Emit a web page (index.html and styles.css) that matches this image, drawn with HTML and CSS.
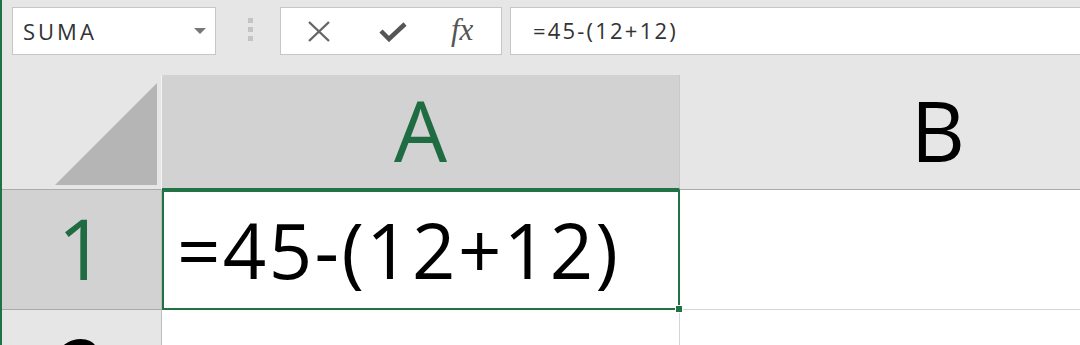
FILE: index.html
```html
<!DOCTYPE html>
<html lang="es">
<head>
  <meta charset="UTF-8" />
  <title>SUMA</title>
  <link rel="stylesheet" href="styles.css">
</head>
<body>
  <div class="toolbar">
    <div class="namebox">
      <span class="name">SUMA</span>
      <span class="caret"></span>
    </div>
    <div class="grip"><i></i><i></i><i></i></div>
    <div class="btnbox">
      <svg class="ico-x" width="24" height="21" viewBox="0 0 24 21">
        <path d="M2 1 L22 20 M22 1 L2 20" stroke="#666" stroke-width="2.4" fill="none"/>
      </svg>
      <svg class="ico-ok" width="30" height="21" viewBox="0 0 30 21">
        <path d="M3 10 L11 18 L27 3" stroke="#555" stroke-width="4.5" fill="none"/>
      </svg>
      <span class="fx">fx</span>
    </div>
    <div class="formula">=45-(12+12)</div>
  </div>

  <div class="sheet">
    <div class="corner">
      <svg width="159" height="114" viewBox="0 0 159 114">
        <polygon points="53,110 155,110 155,8" fill="#b5b5b5"/>
      </svg>
    </div>
    <div class="colhead selected">A</div>
    <div class="colhead">B</div>

    <div class="rowhead selected">1</div>
    <div class="cell active">
      =45-(12+12)
      <span class="handle"></span>
    </div>
    <div class="cell">&nbsp;</div>

    <div class="rowhead">2</div>
    <div class="cell">&nbsp;</div>
    <div class="cell">&nbsp;</div>
  </div>
</body>
</html>
```

FILE: styles.css
```css
body {
  margin: 0;
  height: 345px;
  overflow: hidden;
  background: #e6e6e6;
  border-left: 2px solid #217346;
  font-family: "Open Sans", "Noto Sans", sans-serif;
}

.toolbar {
  display: flex;
  align-items: flex-start;
  height: 75px;
  padding: 7px 0 0 10px;
  box-sizing: border-box;
}

.namebox {
  display: flex;
  align-items: center;
  justify-content: space-between;
  width: 204px;
  height: 48px;
  box-sizing: border-box;
  padding: 0 9px 0 10px;
  background: #fff;
  border: 1px solid #c6c6c6;
}

.name {
  font-size: 22px;
  letter-spacing: 3px;
  color: #333;
}

.caret {
  width: 0;
  height: 0;
  border-left: 6px solid transparent;
  border-right: 6px solid transparent;
  border-top: 6px solid #777;
}

.grip {
  display: flex;
  flex-direction: column;
  gap: 4px;
  margin: 11px 0 0 32px;
}

.grip i {
  display: block;
  width: 5px;
  height: 5px;
  background: #c4c4c4;
}

.btnbox {
  display: flex;
  align-items: center;
  width: 222px;
  height: 48px;
  box-sizing: border-box;
  margin-left: 27px;
  padding-left: 26px;
  background: #fff;
  border: 1px solid #c6c6c6;
}

.ico-ok {
  margin-left: 47px;
}

.fx {
  margin: -4px 0 0 43px;
  font-family: "Liberation Serif", serif;
  font-style: italic;
  font-size: 31px;
  color: #555;
  line-height: 1;
}

.formula {
  flex: 1;
  height: 48px;
  margin: 0 -10px 0 8px;
  padding-left: 22px;
  box-sizing: border-box;
  background: #fff;
  border: 1px solid #c6c6c6;
  font-size: 22px;
  letter-spacing: 2.2px;
  line-height: 45px;
  color: #333;
}

.sheet {
  display: grid;
  grid-template-columns: 160px 518px 517px;
  grid-template-rows: 115px 120px 60px;
  width: 1195px;
}

.corner {
  background: #e6e6e6;
  border-right: 1px solid #f4f4f4;
  border-bottom: 1px solid #ababab;
}

.corner svg {
  display: block;
}

.colhead {
  background: #e6e6e6;
  border-right: 1px solid #c8c8c8;
  border-bottom: 1px solid #ababab;
  text-align: center;
  font-size: 84px;
  line-height: 110px;
  color: #000;
}

.colhead.selected {
  background: #d2d2d2;
  color: #1f6b42;
  border-bottom: 2px solid #217346;
}

.rowhead {
  background: #e6e6e6;
  border-right: 1px solid #bdbdbd;
  border-bottom: 1px solid #ababab;
  text-align: center;
  font-size: 84px;
  line-height: 116px;
  color: #000;
}

.rowhead.selected {
  background: #d2d2d2;
  color: #1f6b42;
}

.cell {
  background: #fff;
  border-right: 1px solid #d4d4d4;
  border-bottom: 1px solid #d4d4d4;
}

.cell.active {
  position: relative;
  padding: 4px 0 0 15px;
  box-shadow: inset 0 0 0 2px #217346;
  border: none;
  font-size: 76px;
  font-weight: 500;
  letter-spacing: 2.4px;
  line-height: 112px;
  color: #000;
  white-space: nowrap;
}

.handle {
  position: absolute;
  right: -3px;
  bottom: -3px;
  width: 6px;
  height: 6px;
  background: #217346;
  border: 1px solid #fff;
  z-index: 2;
}
```
